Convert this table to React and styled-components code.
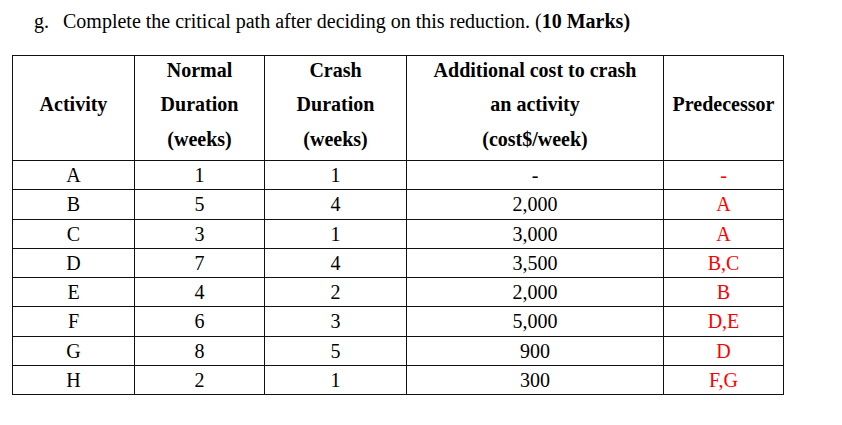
import React from "react"
import styled, { createGlobalStyle } from "styled-components"

const GlobalStyle = createGlobalStyle`
  html, body {
    margin: 0;
    padding: 0;
    background: #fff;
  }
  body {
    font-family: "Liberation Serif", "Times New Roman", serif;
    color: #000;
  }
`

const Page = styled.div`
  padding: 8px 0 0 12px;
`

const Title = styled.p`
  margin: 0 0 21px 0;
  padding-left: 22px;
  font-size: 20px;
  line-height: 26px;
  display: flex;
`

const Label = styled.span`
  width: 29px;
`

const Bold = styled.b`
  font-weight: 700;
`

const Table = styled.table`
  border-collapse: collapse;
  table-layout: fixed;
  width: 771px;
  font-size: 20px;
`

const HeadCell = styled.th`
  border: 1px solid #111;
  padding: 0;
  height: 104px;
  font-weight: 700;
  line-height: 34.5px;
  text-align: center;
  vertical-align: middle;
`

const HeadLines = styled.div`
  margin-top: -7px;
`

const Cell = styled.td`
  border: 1px solid #111;
  padding: 1px 0 0 0;
  height: 27.25px;
  line-height: 27px;
  text-align: center;
  color: ${({ $red }) => ($red ? "#ff0000" : "#000")};
`

const columns = [
  { width: 122, head: ["Activity"] },
  { width: 130, head: ["Normal", "Duration", "(weeks)"] },
  { width: 142, head: ["Crash", "Duration", "(weeks)"] },
  { width: 257, head: ["Additional cost to crash", "an activity", "(cost$/week)"] },
  { width: 120, head: ["Predecessor"] },
]

const rows = [
  ["A", "1", "1", "-", "-"],
  ["B", "5", "4", "2,000", "A"],
  ["C", "3", "1", "3,000", "A"],
  ["D", "7", "4", "3,500", "B,C"],
  ["E", "4", "2", "2,000", "B"],
  ["F", "6", "3", "5,000", "D,E"],
  ["G", "8", "5", "900", "D"],
  ["H", "2", "1", "300", "F,G"],
]

export default function App() {
  return (
    <>
      <GlobalStyle />
      <Page>
        <Title>
          <Label>g.</Label>
          <span>
            Complete the critical path after deciding on this reduction. (<Bold>10 Marks)</Bold>
          </span>
        </Title>
        <Table>
          <colgroup>
            {columns.map((c, i) => (
              <col key={i} style={{ width: c.width }} />
            ))}
          </colgroup>
          <thead>
            <tr>
              {columns.map((c, i) => (
                <HeadCell key={i}>
                  <HeadLines>
                    {c.head.map((line, j) => (
                      <div key={j}>{line}</div>
                    ))}
                  </HeadLines>
                </HeadCell>
              ))}
            </tr>
          </thead>
          <tbody>
            {rows.map((r) => (
              <tr key={r[0]}>
                {r.map((v, i) => (
                  <Cell key={i} $red={i === 4}>
                    {v}
                  </Cell>
                ))}
              </tr>
            ))}
          </tbody>
        </Table>
      </Page>
    </>
  )
}
